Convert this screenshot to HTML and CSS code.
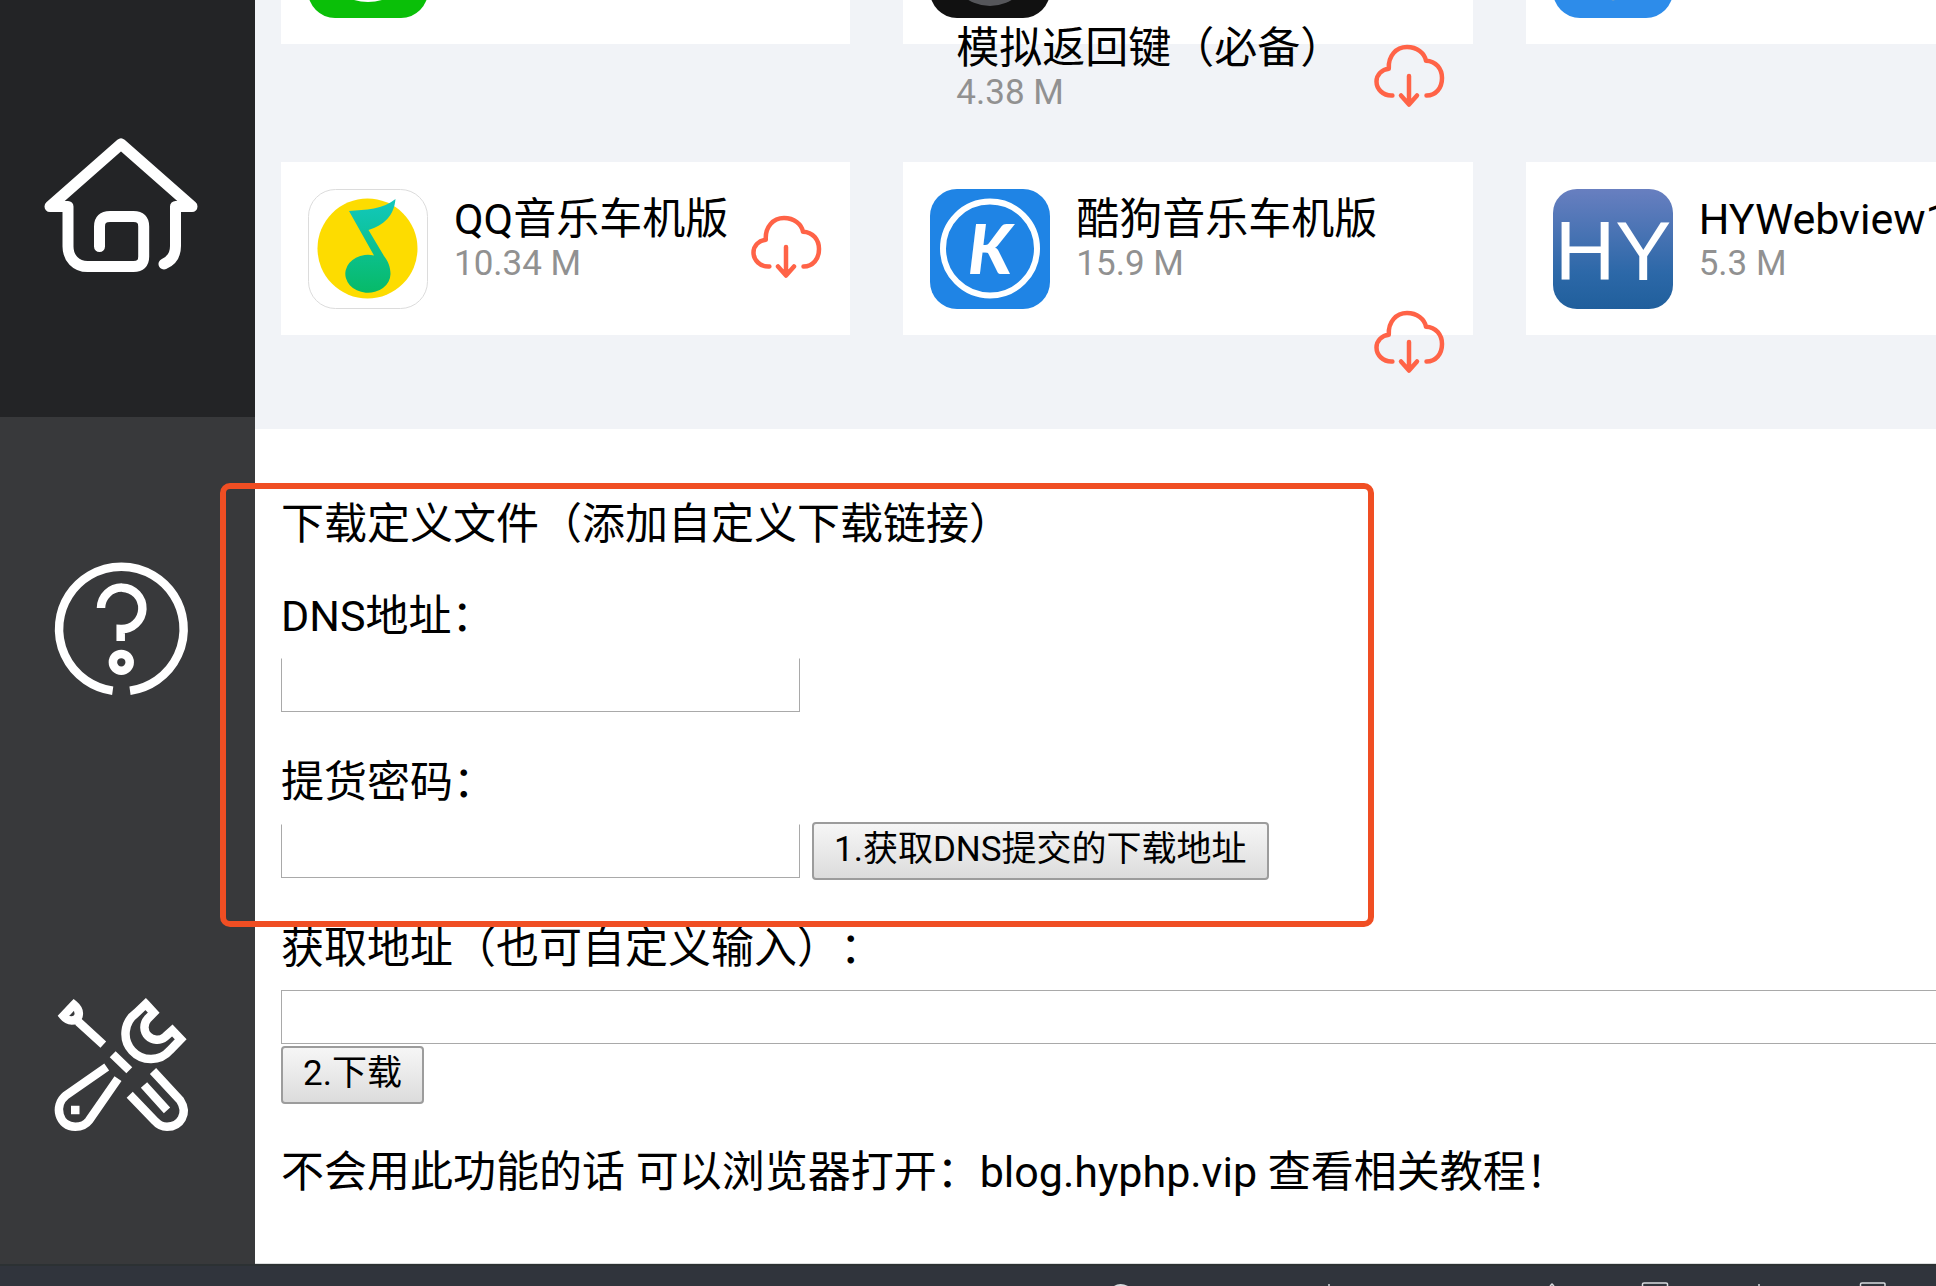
FILE: index.html
```html
<!DOCTYPE html>
<html lang="zh-CN">
<head>
    <meta charset="UTF-8">
    <meta name="viewport" content="width=device-width, initial-scale=1.0">
    <title>车机软件下载</title>
    <link rel="stylesheet" href="styles.css">
</head>
<body>
    <!-- 公用图标 -->
    <svg class="symbols" width="0" height="0" aria-hidden="true">
        <symbol id="cloud" viewBox="0 0 80 80">
            <path d="M23.4 60.5C14 61 7.5 54 7.5 46.5C7.5 39.5 13 34.5 19.8 33.7C19 21 27 12 38 12C48 12 55.5 18 57 25.7C67 26 73 34 73 43C73 53 67 60.5 57.5 60.5M40 41V69M32 60.5L40 69.5L48 60.5" fill="none" stroke="#ff6347" stroke-width="4.5" stroke-linecap="round" stroke-linejoin="round"/>
        </symbol>
    </svg>

    <div class="page">
        <div class="layout">
            <nav class="sidebar">
                <a href="#home" class="nav-item active" aria-label="首页">
                    <svg class="nav-icon" viewBox="0 0 160 160" fill="none" stroke="#fff" stroke-width="11" stroke-linecap="round" stroke-linejoin="round">
                        <path d="M123 140C130 137 134.5 131 134.5 122V82.5H151L80 20L9 82.5H27V122.5C27 134 35 142.5 46.5 142.5H92.5Q102.7 142.5 102.7 132.5V102.5Q102.7 92.5 92.5 92.5H69Q58.5 92.5 58.5 102.5V122.5"/>
                    </svg>
                </a>
                <a href="#help" class="nav-item" aria-label="帮助">
                    <svg class="nav-icon" viewBox="0 0 160 160" fill="none" stroke="#fff" stroke-width="8.5">
                        <path d="M71.7 140.7A62.3 62.3 0 1 1 89 140.7"/>
                        <path d="M60 58A20.7 20.7 0 1 1 79.7 79V91"/>
                        <circle cx="80.3" cy="112.3" r="8.4"/>
                    </svg>
                </a>
                <a href="#tools" class="nav-item" aria-label="工具">
                    <svg class="nav-icon" viewBox="0 0 160 160" fill="none" stroke="#fff" stroke-width="8.5">
                        <path d="M104.7 28L112.7 36.7L106.5 43A12.6 12.6 0 0 0 124 61L131.3 54.5L139.7 63.3L129 74.3A25.3 25.3 0 1 1 95 37.3Z"/>
                        <path d="M33 28.7L22.3 40C27 46 35 46 37.5 40C38.5 36 37 32 33 28.7Z"/>
                        <path d="M37 45.5L62.3 68.7M71.7 78.3L88.3 94.3"/>
                        <path d="M65.7 91L25 119.3C12 130 18 150.7 34.3 150.7C40 150.7 45 148.5 48 144.5L77 102.7"/>
                        <path d="M30 134H38.5"/>
                        <path d="M112 95L139 124C148 138 139 150.7 126 150.7C121 150.7 117 148.5 114 145L88.7 118.7M103 109L126 134.3"/>
                    </svg>
                </a>
            </nav>

            <main class="content">
                <section class="apps">
                    <div class="app-grid">
                        <div class="app-card">
                            <svg class="app-icon" viewBox="0 0 120 120">
                                <rect width="120" height="120" rx="27" fill="#0abf08"/>
                                <ellipse cx="60" cy="72" rx="40" ry="32" fill="#fff"/>
                            </svg>
                        </div>
                        <div class="app-card">
                            <svg class="app-icon" viewBox="0 0 120 120">
                                <rect width="120" height="120" rx="27" fill="#111"/>
                                <circle cx="60" cy="66" r="42" fill="#55565a"/>
                            </svg>
                            <div class="app-info">
                                <div class="app-name">模拟返回键（必备）</div>
                                <div class="app-size">4.38 M</div>
                            </div>
                            <a href="#download" class="download" aria-label="下载"><svg class="cloud"><use href="#cloud"/></svg></a>
                        </div>
                        <div class="app-card">
                            <svg class="app-icon" viewBox="0 0 120 120">
                                <rect width="120" height="120" rx="27" fill="#2d8cea"/>
                                <path d="M52 98L70 98L60 103Z" fill="#5e9bd0"/>
                            </svg>
                        </div>
                        <div class="app-card">
                            <svg class="app-icon" viewBox="0 0 120 120">
                                <defs>
                                    <linearGradient id="note" x1="0" y1="0" x2="0" y2="1">
                                        <stop offset="0" stop-color="#12c8be"/>
                                        <stop offset="1" stop-color="#07ba68"/>
                                    </linearGradient>
                                </defs>
                                <rect x="0.5" y="0.5" width="119" height="119" rx="27" fill="#fff" stroke="#dcdcdc"/>
                                <circle cx="59.5" cy="59.5" r="50" fill="#fddc00"/>
                                <path d="M41 22C57 21 76 20 87.5 10C86 27 76 36 60.5 41L76 67C80 72 82.5 78 82.5 85A22.6 19 0 1 1 66 66.5Z" fill="url(#note)"/>
                            </svg>
                            <div class="app-info">
                                <div class="app-name">QQ音乐车机版</div>
                                <div class="app-size">10.34 M</div>
                            </div>
                            <a href="#download" class="download" aria-label="下载"><svg class="cloud"><use href="#cloud"/></svg></a>
                        </div>
                        <div class="app-card">
                            <svg class="app-icon" viewBox="0 0 120 120">
                                <rect width="120" height="120" rx="27" fill="#1f84e5"/>
                                <circle cx="60" cy="59.5" r="47" fill="none" stroke="#fff" stroke-width="6"/>
                                <text x="60" y="85" class="logo-k">K</text>
                            </svg>
                            <div class="app-info">
                                <div class="app-name">酷狗音乐车机版</div>
                                <div class="app-size">15.9 M</div>
                            </div>
                            <a href="#download" class="download" aria-label="下载"><svg class="cloud"><use href="#cloud"/></svg></a>
                        </div>
                        <div class="app-card">
                            <svg class="app-icon" viewBox="0 0 120 120">
                                <defs>
                                    <linearGradient id="hy" x1="0" y1="0" x2="0" y2="1">
                                        <stop offset="0" stop-color="#687fc0"/>
                                        <stop offset="0.7" stop-color="#2c68a8"/>
                                        <stop offset="1" stop-color="#205f9c"/>
                                    </linearGradient>
                                </defs>
                                <rect width="120" height="120" rx="24" fill="url(#hy)"/>
                                <text x="60" y="91" class="logo-hy">HY</text>
                            </svg>
                            <div class="app-info">
                                <div class="app-name">HYWebview1</div>
                                <div class="app-size">5.3 M</div>
                            </div>
                            <a href="#download" class="download" aria-label="下载"><svg class="cloud"><use href="#cloud"/></svg></a>
                        </div>
                    </div>
                </section>

                <form class="custom">
                    <p class="line">下载定义文件（添加自定义下载链接）</p>
                    <div class="field">
                        <label class="line" for="dns">DNS地址：</label>
                        <div class="field-row">
                            <input type="text" id="dns" class="text-input short">
                        </div>
                    </div>
                    <div class="field">
                        <label class="line" for="code">提货密码：</label>
                        <div class="field-row">
                            <input type="text" id="code" class="text-input short">
                            <button type="button" class="btn">1.获取DNS提交的下载地址</button>
                        </div>
                    </div>
                    <div class="field">
                        <label class="line" for="url">获取地址（也可自定义输入）：</label>
                        <div class="field-row">
                            <input type="text" id="url" class="text-input long">
                        </div>
                        <button type="button" class="btn">2.下载</button>
                    </div>
                    <p class="line">不会用此功能的话 可以浏览器打开：blog.hyphp.vip 查看相关教程！</p>
                    <div class="highlight"></div>
                </form>
            </main>
        </div>

        <footer class="bottom-bar">
            <svg class="bar-icons" viewBox="0 0 780 4" fill="none" stroke="#d8dade" stroke-width="1.5">
                <path d="M8 4Q14 0 22 4Z" fill="#d8dade" stroke="none"/>
                <path d="M223 2V4M444 4L446 2L448 4M653 2V4"/>
                <path d="M536.5 4V2Q536.5 1 538 1H560Q561.5 1 561.5 2V4M754.5 4V2Q754.5 1 756 1H778Q779 1 779 2V4"/>
            </svg>
        </footer>
    </div>
</body>
</html>
```
FILE: styles.css
```css
:root {
    --sidebar-bg: #38393b;
    --sidebar-active: #232426;
    --apps-bg: #f1f3f7;
    --accent: #f04e23;
    --border-color: #a9a9a9;
}

* {
    box-sizing: border-box;
}

body {
    margin: 0;
    font-family: Roboto, "Noto Sans CJK SC", sans-serif;
    font-size: 43px;
    line-height: 48px;
    color: #000;
    background-color: #fff;
    text-spacing-trim: space-all;
}

.symbols {
    position: absolute;
}

.page {
    display: flex;
    flex-direction: column;
    min-height: 100vh;
    overflow: hidden;
}

.layout {
    display: flex;
    border-bottom: 1px solid #dcdede;
}

/* 左侧导航 */
.sidebar {
    flex: none;
    width: 255px;
    margin-top: -9px;
    margin-bottom: -1px;
    background-color: var(--sidebar-bg);
}

.nav-item {
    display: flex;
    justify-content: center;
    padding: 133px 13px 133px 0;
}

.nav-item:last-child {
    padding-bottom: 100px;
}

.nav-item.active {
    background-color: var(--sidebar-active);
}

.nav-icon {
    width: 160px;
    height: 160px;
}

.content {
    flex: 1;
    min-width: 0;
}

/* 软件列表 */
.apps {
    padding: 0 0 94px 26px;
    background-color: var(--apps-bg);
    overflow: hidden;
}

.app-grid {
    display: grid;
    grid-template-columns: repeat(3, 34.4%);
    grid-auto-rows: 173px;
    gap: 118px 53px;
    margin-top: -129px;
}

.app-card {
    padding: 27px 24px 0 27px;
    background-color: #fff;
}

.app-icon {
    float: left;
    width: 120px;
    height: 120px;
}

.app-info {
    float: left;
    margin-left: 26px;
    padding-top: 6px;
}

.app-name {
    white-space: nowrap;
}

.app-size {
    font-size: 35px;
    line-height: 41px;
    color: #919191;
}

.download {
    float: right;
    margin-top: 17px;
}

.cloud {
    display: block;
    width: 80px;
    height: 80px;
}

.logo-k {
    font-family: Lato, sans-serif;
    font-size: 68px;
    font-weight: 900;
    font-style: italic;
    text-anchor: middle;
    fill: #fff;
}

.logo-hy {
    font-family: "Liberation Sans", Arial, sans-serif;
    font-size: 84px;
    text-anchor: middle;
    fill: #fff;
}

/* 自定义下载 */
.custom {
    position: relative;
    display: flex;
    flex-direction: column;
    gap: 44px;
    padding: 71px 0 67px 26px;
}

.line {
    display: block;
    margin: 0;
}

.field-row {
    display: flex;
    align-items: center;
    gap: 12px;
    height: 58px;
    margin-top: 16px;
}

.text-input {
    height: 54px;
    padding: 0 8px;
    font: inherit;
    border: 1px solid var(--border-color);
    background-color: #fff;
    outline: none;
}

.short {
    width: 519px;
    border-top-color: #fff;
}

.long {
    flex: none;
    width: 105%;
}

.btn {
    display: block;
    height: 58px;
    padding: 0 20px 2px;
    font-family: inherit;
    font-size: 35px;
    line-height: 48px;
    color: #000;
    border: 2px solid #9c9c9c;
    border-radius: 4px;
    background: linear-gradient(#f6f6f6, #dcdcdc);
}

.highlight {
    position: absolute;
    top: 54px;
    left: -35px;
    width: 1154px;
    height: 444px;
    border: 6px solid var(--accent);
    border-radius: 10px;
    pointer-events: none;
}

.bottom-bar {
    display: flex;
    flex: 1;
    justify-content: flex-end;
    align-items: flex-end;
    min-height: 22px;
    padding-right: 50px;
    border-top: 2px solid #2c3133;
    background-color: #30343c;
}

.bar-icons {
    width: 780px;
    height: 4px;
}
```
